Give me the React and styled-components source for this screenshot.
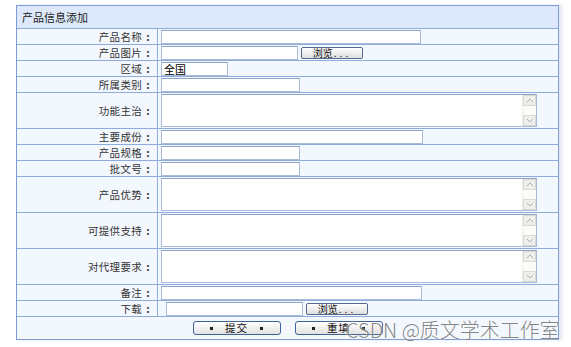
import styled, { createGlobalStyle } from "styled-components";

const GlobalStyle = createGlobalStyle`
	html, body {
		margin: 0;
		padding: 0;
		background: #ffffff;
	}
	body {
		font-family: "Noto Sans CJK SC", "Noto Sans", sans-serif;
		color: #333333;
	}
`;

const Page = styled.div`
	position: relative;
	width: 571px;
	height: 347px;
	padding: 5px 0 0 16px;
	box-sizing: border-box;
`;

const Form = styled.div`
	display: grid;
	grid-template-columns: 140px 1fr;
	gap: 1px;
	width: 543px;
	box-sizing: border-box;
	border: 1px solid #7c9cd6;
	background: #8eabdd;
	box-shadow: 3px 0 3px rgba(200, 212, 232, 0.5);
`;

const Title = styled.div`
	grid-column: 1 / -1;
	height: 22px;
	display: flex;
	align-items: center;
	padding-left: 5px;
	background: #dde9fb;
	font-size: 11px;
	color: #222222;
`;

const Label = styled.div`
	height: ${(props) => (props.$tall ? "35px" : "15px")};
	display: flex;
	align-items: center;
	justify-content: flex-end;
	padding-right: 3px;
	background: #f3f7fe;
	font-size: 10.5px;
	color: #333333;
	letter-spacing: 0.3px;
`;

const Colon = styled.span`
	width: 12px;
	text-align: center;
	font-weight: bold;
`;

const Field = styled.div`
	height: ${(props) => (props.$tall ? "35px" : "15px")};
	display: flex;
	align-items: center;
	gap: 3px;
	padding-left: ${(props) => props.$indent || "3px"};
	background: #f3f7fe;
`;

const TextInput = styled.input`
	width: ${(props) => props.$w}px;
	height: 14px;
	box-sizing: border-box;
	margin: 0;
	padding: 0 2px;
	border: 1px solid #a9bbd6;
	border-top-color: #8ea4c4;
	background: #ffffff;
	font-family: "Noto Sans CJK SC", sans-serif;
	font-size: 11px;
	color: #000000;
	outline: none;
`;

const BrowseButton = styled.button`
	width: 62px;
	height: 12px;
	margin: 0;
	padding: 0;
	border: 1px solid #55698c;
	border-radius: 2px;
	background: linear-gradient(#ffffff, #dedede);
	font-family: "Noto Sans CJK SC", sans-serif;
	font-size: 10px;
	line-height: 10px;
	color: #111111;

	span {
		letter-spacing: 3px;
		margin-left: 1px;
	}
`;

const TextBox = styled.div`
	width: 376px;
	height: 33px;
	box-sizing: border-box;
	display: flex;
	border: 1px solid #a9bbd6;
	border-top-color: #8ea4c4;
	background: #ffffff;
`;

const Area = styled.textarea`
	flex: 1;
	margin: 0;
	padding: 1px 2px;
	border: none;
	resize: none;
	overflow: hidden;
	outline: none;
	background: transparent;
	font-size: 11px;
`;

const ScrollBar = styled.div`
	width: 13px;
	display: flex;
	flex-direction: column;
	justify-content: space-between;
	background: #fbfbf7;
	border-left: 1px solid #eeeeea;
`;

const Arrow = styled.div`
	height: 11px;
	display: flex;
	align-items: center;
	justify-content: center;
	background: #eeeeea;
	border: 1px solid #dadad4;
	box-sizing: border-box;
`;

const ButtonRow = styled.div`
	grid-column: 1 / -1;
	height: 22px;
	display: flex;
	align-items: center;
	justify-content: center;
	gap: 14px;
	background: #f3f7fe;
`;

const ActionButton = styled.button`
	width: 88px;
	height: 14px;
	margin: 0;
	padding: 0;
	display: flex;
	align-items: center;
	justify-content: center;
	gap: 12px;
	border: 1px solid #3f6199;
	border-radius: 3px;
	background: linear-gradient(#ffffff, #e2e2e2);
	font-family: "Noto Sans CJK SC", sans-serif;
	font-size: 10.5px;
	line-height: 12px;
	letter-spacing: 1px;
	color: #111111;
`;

const Dot = styled.i`
	width: 3px;
	height: 3px;
	background: #222222;
`;

const Watermark = styled.div`
	position: absolute;
	left: 346px;
	top: 315px;
	font-family: "Noto Sans CJK SC", sans-serif;
	font-weight: 300;
	font-size: 20px;
	color: rgba(110, 110, 110, 0.85);
	text-shadow: 0 0 2px #ffffff;
	white-space: nowrap;
`;

const Chevron = ({ up }) => (
	<svg width="8" height="5" viewBox="0 0 8 5">
		<path
			d={up ? "M1 4 L4 1 L7 4" : "M1 1 L4 4 L7 1"}
			fill="none"
			stroke="#a7b0bd"
			strokeWidth="1"
		/>
	</svg>
);

const Memo = () => (
	<TextBox>
		<Area />
		<ScrollBar>
			<Arrow>
				<Chevron up />
			</Arrow>
			<Arrow>
				<Chevron />
			</Arrow>
		</ScrollBar>
	</TextBox>
);

const rows = [
	{ label: "产品名称", kind: "text", w: 260 },
	{ label: "产品图片", kind: "file", w: 137 },
	{ label: "区域", kind: "text", w: 67, value: "全国" },
	{ label: "所属类别", kind: "text", w: 139 },
	{ label: "功能主治", kind: "memo" },
	{ label: "主要成份", kind: "text", w: 262 },
	{ label: "产品规格", kind: "text", w: 139 },
	{ label: "批文号", kind: "text", w: 139 },
	{ label: "产品优势", kind: "memo" },
	{ label: "可提供支持", kind: "memo" },
	{ label: "对代理要求", kind: "memo" },
	{ label: "备注", kind: "text", w: 261 },
	{ label: "下载", kind: "file", w: 137, indent: "8px" },
];

const App = () => {
	return (
		<>
			<GlobalStyle />
			<Page>
				<Form>
					<Title>产品信息添加</Title>
					{rows.map((row) => {
						const tall = row.kind === "memo";
						return [
							<Label key={row.label + "l"} $tall={tall}>
								{row.label}
								<Colon>:</Colon>
							</Label>,
							<Field key={row.label + "f"} $tall={tall} $indent={row.indent}>
								{row.kind === "memo" && <Memo />}
								{row.kind === "text" && (
									<TextInput $w={row.w} defaultValue={row.value} />
								)}
								{row.kind === "file" && (
									<>
										<TextInput $w={row.w} />
										<BrowseButton>
											浏览<span>...</span>
										</BrowseButton>
									</>
								)}
							</Field>,
						];
					})}
					<ButtonRow>
						<ActionButton>
							<Dot />提交<Dot />
						</ActionButton>
						<ActionButton>
							<Dot />重填<Dot />
						</ActionButton>
					</ButtonRow>
				</Form>
				<Watermark>CSDN @质文学术工作室</Watermark>
			</Page>
		</>
	);
};

export default App;
